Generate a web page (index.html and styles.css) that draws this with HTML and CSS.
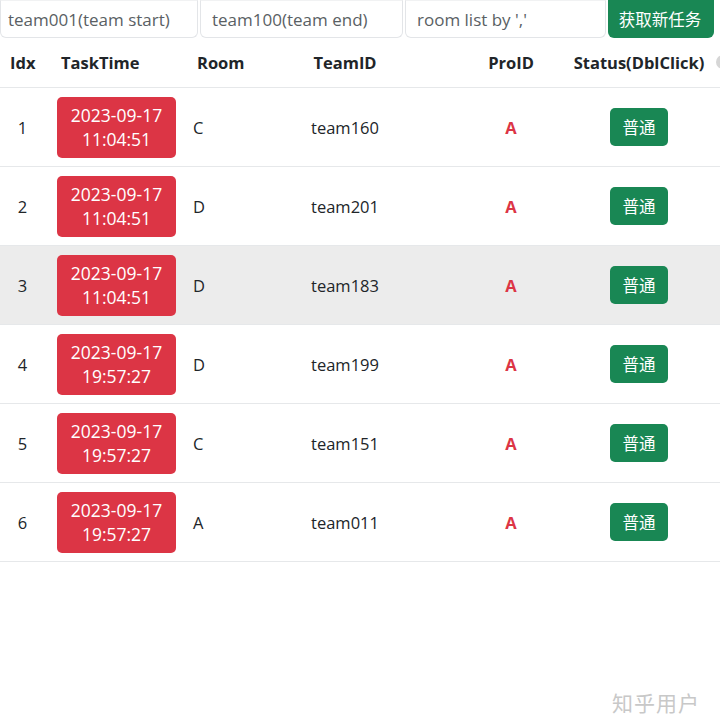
FILE: index.html
```html
<!DOCTYPE html>
<html>
<head>
<meta charset="utf-8">
<link rel="stylesheet" href="styles.css">
</head>
<body>
<div class="toolbar">
  <input class="field f1" placeholder="team001(team start)">
  <input class="field f2" placeholder="team100(team end)">
  <input class="field f3" placeholder="room list by ','">
  <button class="btn-get">获取新任务</button>
</div>
<div class="table">
  <div class="row head">
    <div class="c idx">Idx</div>
    <div class="c time">TaskTime</div>
    <div class="c room">Room</div>
    <div class="c team">TeamID</div>
    <div class="c pro">ProID</div>
    <div class="c status">Status(DblClick)</div>
    <div class="c extra"><span class="knob"></span></div>
  </div>
  <div class="row">
    <div class="c idx">1</div>
    <div class="c time"><span class="badge">2023-09-17<br>11:04:51</span></div>
    <div class="c room">C</div>
    <div class="c team">team160</div>
    <div class="c pro">A</div>
    <div class="c status"><span class="btn-s">普通</span></div>
    <div class="c extra"></div>
  </div>
  <div class="row">
    <div class="c idx">2</div>
    <div class="c time"><span class="badge">2023-09-17<br>11:04:51</span></div>
    <div class="c room">D</div>
    <div class="c team">team201</div>
    <div class="c pro">A</div>
    <div class="c status"><span class="btn-s">普通</span></div>
    <div class="c extra"></div>
  </div>
  <div class="row hover">
    <div class="c idx">3</div>
    <div class="c time"><span class="badge">2023-09-17<br>11:04:51</span></div>
    <div class="c room">D</div>
    <div class="c team">team183</div>
    <div class="c pro">A</div>
    <div class="c status"><span class="btn-s">普通</span></div>
    <div class="c extra"></div>
  </div>
  <div class="row">
    <div class="c idx">4</div>
    <div class="c time"><span class="badge">2023-09-17<br>19:57:27</span></div>
    <div class="c room">D</div>
    <div class="c team">team199</div>
    <div class="c pro">A</div>
    <div class="c status"><span class="btn-s">普通</span></div>
    <div class="c extra"></div>
  </div>
  <div class="row">
    <div class="c idx">5</div>
    <div class="c time"><span class="badge">2023-09-17<br>19:57:27</span></div>
    <div class="c room">C</div>
    <div class="c team">team151</div>
    <div class="c pro">A</div>
    <div class="c status"><span class="btn-s">普通</span></div>
    <div class="c extra"></div>
  </div>
  <div class="row">
    <div class="c idx">6</div>
    <div class="c time"><span class="badge">2023-09-17<br>19:57:27</span></div>
    <div class="c room">A</div>
    <div class="c team">team011</div>
    <div class="c pro">A</div>
    <div class="c status"><span class="btn-s">普通</span></div>
    <div class="c extra"></div>
  </div>
</div>
<div class="watermark">知乎用户</div>
</body>
</html>
```
FILE: styles.css
```css
html, body {
  margin: 0;
  padding: 0;
  background: #fff;
}
body {
  font-family: "Open Sans", "Noto Sans CJK SC", sans-serif;
  font-size: 16.5px;
  color: #212529;
  width: 720px;
  height: 727px;
  position: relative;
  overflow: hidden;
}
.toolbar {
  display: flex;
  height: 38px;
  gap: 2px;
}
.field {
  box-sizing: border-box;
  height: 38px;
  border: 1px solid #e3e5e8;
  border-top-color: #f1f2f3;
  border-radius: 0 0 6px 6px;
  padding: 0 0 0 7px;
  font-family: "Open Sans", "Noto Sans CJK SC", sans-serif;
  font-size: 17px;
  color: #212529;
  outline: none;
  background: #fff;
}
.field::placeholder {
  color: #5a5f64;
}
.f1 { width: 198px; }
.f2 { width: 203px; padding-left: 11px; }
.f3 { width: 201px; padding-left: 11px; }
.btn-get {
  width: 106px;
  height: 38px;
  border: none;
  border-radius: 0 0 6px 6px;
  background: #198754;
  color: #fff;
  font-family: "Noto Sans CJK SC", sans-serif;
  font-size: 16.5px;
  padding: 0 2px 0 0;
}
.table {
  width: 720px;
}
.row {
  display: grid;
  grid-template-columns: 45px 140px 85px 150px 150px 138px 12px;
  height: 78px;
  border-bottom: 1px solid #e6e8ea;
  align-items: center;
}
.row.head {
  height: 49px;
  font-weight: 700;
}
.row.hover {
  background: #ececec;
}
.c {
  white-space: nowrap;
}
.idx { text-align: center; }
.head .idx { text-align: left; padding-left: 10px; }
.time { padding-left: 12px; }
.head .time { padding-left: 16px; }
.room { padding-left: 8px; }
.head .room { padding-left: 12px; }
.team { text-align: center; }
.pro { text-align: center; color: #dc3545; font-weight: 700; padding-left: 32px; }
.head .pro { color: #212529; }
.status { display: flex; justify-content: center; }
.badge {
  display: inline-block;
  width: 119px;
  height: 61px;
  box-sizing: border-box;
  background: #dc3545;
  color: #fff;
  border-radius: 5px;
  text-align: center;
  font-size: 17.5px;
  line-height: 24px;
  padding-top: 6px;
}
.btn-s {
  display: inline-block;
  width: 58px;
  height: 38px;
  line-height: 38px;
  text-align: center;
  background: #198754;
  color: #fff;
  border-radius: 5px;
  font-family: "Noto Sans CJK SC", sans-serif;
}
.extra { position: relative; height: 100%; }
.knob {
  position: absolute;
  left: 8px;
  top: 17px;
  width: 14px;
  height: 14px;
  border-radius: 50%;
  background: #d6d6d6;
}
.watermark {
  position: absolute;
  left: 612px;
  top: 687px;
  font-family: "Noto Sans CJK SC", sans-serif;
  font-size: 21px;
  color: #c8c8c8;
  letter-spacing: 1px;
}
```
